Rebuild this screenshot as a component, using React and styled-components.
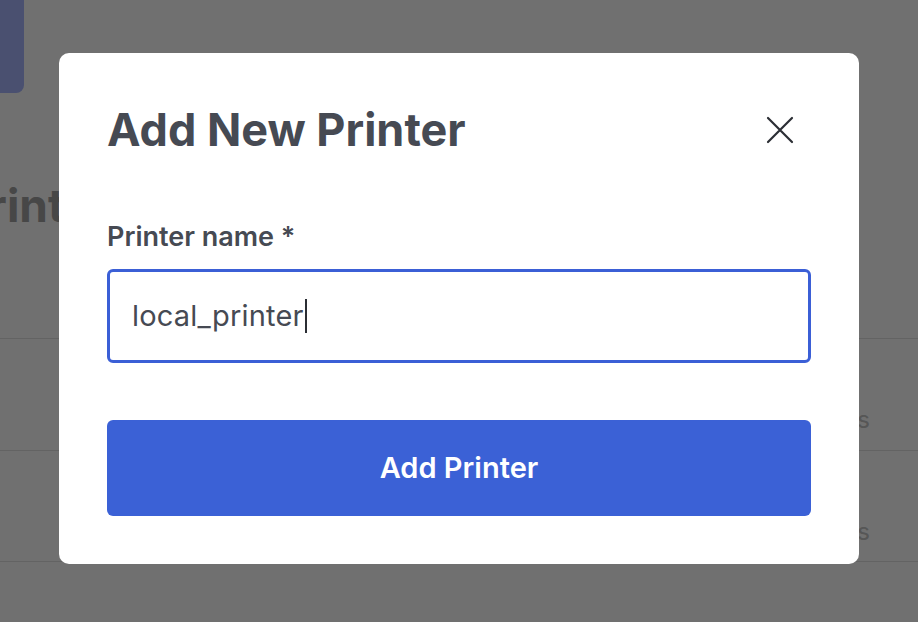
import styled, { createGlobalStyle } from 'styled-components';

const GlobalStyle = createGlobalStyle`
  html, body {
    margin: 0;
    padding: 0;
    height: 100%;
    overflow: hidden;
    background: #ffffff;
    font-family: Inter, 'Noto Sans', sans-serif;
  }
  #root {
    height: 100%;
  }
`;

const Page = styled.div`
  height: 100%;
  display: flex;
  flex-direction: column;
  margin-left: -40px;
`;

const TopButton = styled.div`
  width: 64px;
  height: 93px;
  background: #a8b6fe;
  border-radius: 0 0 8px 0;
`;

const PageTitle = styled.h1`
  margin: 84px 0 0 -2px;
  font-size: 46px;
  font-weight: 700;
  color: #a2a2a2;
  line-height: 56px;
`;

const Table = styled.div`
  margin-top: 105px;
  display: flex;
  flex-direction: column;
`;

const Row = styled.div`
  height: 112px;
  box-sizing: border-box;
  border-top: 1px solid #e2e2e2;
  display: flex;
  align-items: flex-start;
  justify-content: flex-end;
  padding: 66px 48px 0 0;
  font-size: 24px;
  line-height: 30px;
  color: #c4c4c4;
  &:last-child {
    border-bottom: 1px solid #e2e2e2;
  }
`;

const Backdrop = styled.div`
  position: fixed;
  inset: 0;
  background: rgba(0, 0, 0, 0.56);
  display: flex;
  align-items: center;
  justify-content: center;
  padding-bottom: 6px;
`;

const Modal = styled.div`
  width: 800px;
  box-sizing: border-box;
  background: #ffffff;
  border-radius: 10px;
  padding: 48px 48px 48px;
  display: flex;
  flex-direction: column;
`;

const Header = styled.div`
  display: flex;
  align-items: center;
  justify-content: space-between;
`;

const Title = styled.h2`
  margin: 0;
  font-size: 45px;
  font-weight: 700;
  color: #464a53;
  line-height: 58px;
`;

const CloseButton = styled.button`
  width: 40px;
  height: 40px;
  border: none;
  background: none;
  padding: 0;
  margin-right: 11px;
  display: flex;
  align-items: center;
  justify-content: center;
  color: #2b2e34;
  cursor: pointer;
`;

const Field = styled.div`
  margin-top: 62px;
  display: flex;
  flex-direction: column;
  gap: 16px;
`;

const Label = styled.label`
  font-size: 27px;
  font-weight: 600;
  color: #464a53;
  line-height: 32px;
`;

const InputBox = styled.div`
  height: 94px;
  box-sizing: border-box;
  border: 3px solid #3b5fd6;
  border-radius: 6px;
  display: flex;
  align-items: center;
  padding-left: 22px;
  font-size: 29px;
  letter-spacing: 0.2px;
  color: #464a53;
`;

const Caret = styled.span`
  display: inline-block;
  width: 2px;
  height: 34px;
  background: #2b2e34;
  margin-left: 1px;
`;

const SubmitButton = styled.button`
  margin-top: 57px;
  height: 96px;
  border: none;
  border-radius: 6px;
  background: #3b61d6;
  color: #ffffff;
  font-family: inherit;
  font-size: 29px;
  font-weight: 600;
  cursor: pointer;
`;

export default function App() {
  return (
    <>
      <GlobalStyle />
      <Page>
        <TopButton />
        <PageTitle>Printers</PageTitle>
        <Table>
          <Row>Details</Row>
          <Row>Details</Row>
        </Table>
      </Page>
      <Backdrop>
        <Modal>
          <Header>
            <Title>Add New Printer</Title>
            <CloseButton aria-label="Close">
              <svg width="28" height="28" viewBox="0 0 28 28" fill="none">
                <path d="M2 2L26 26M26 2L2 26" stroke="currentColor" strokeWidth="2.2" strokeLinecap="round" />
              </svg>
            </CloseButton>
          </Header>
          <Field>
            <Label>Printer name *</Label>
            <InputBox>
              local_printer
              <Caret />
            </InputBox>
          </Field>
          <SubmitButton>Add Printer</SubmitButton>
        </Modal>
      </Backdrop>
    </>
  );
}
